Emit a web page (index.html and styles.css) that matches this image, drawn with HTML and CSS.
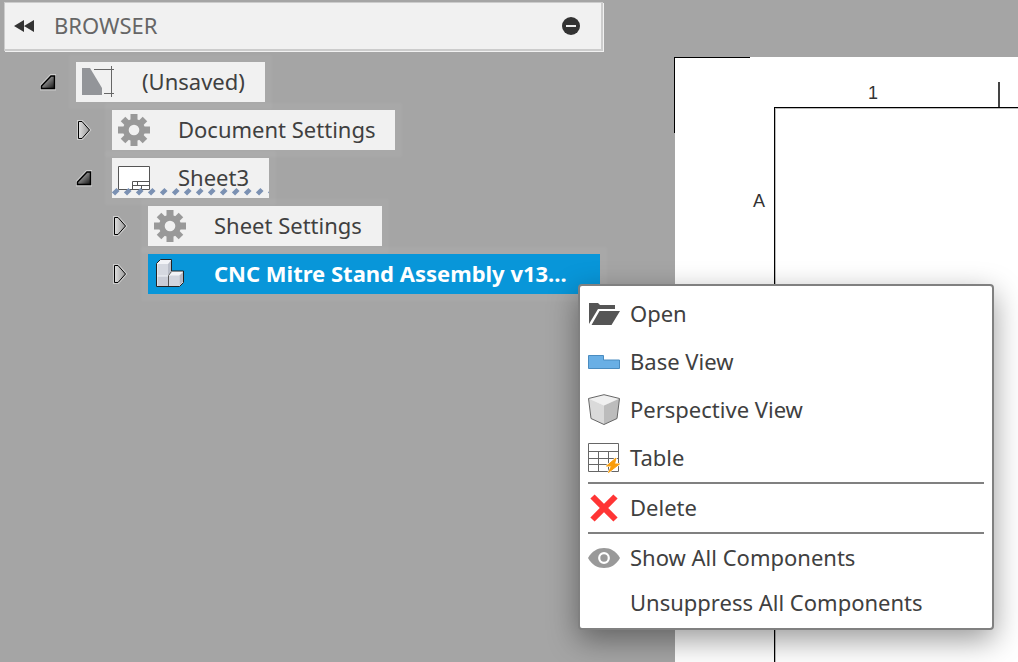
FILE: index.html
```html
<!DOCTYPE html>
<html lang="en">
<head>
  <meta charset="UTF-8">
  <meta name="viewport" content="width=device-width, initial-scale=1.0">
  <title>Browser</title>
  <link rel="stylesheet" href="styles.css">
</head>
<body>
  <!-- Shared icons -->
  <svg class="sprite" aria-hidden="true">
    <defs>
      <linearGradient id="open-fill" x1="0" y1="0" x2="1" y2="1">
        <stop offset="0.3" stop-color="#999"/>
        <stop offset="1" stop-color="#111"/>
      </linearGradient>
      <linearGradient id="closed-fill" x1="0" y1="0" x2="1" y2="0">
        <stop offset="0" stop-color="#e0e0e0"/>
        <stop offset="1" stop-color="#999"/>
      </linearGradient>
      <pattern id="hatch" width="12" height="9" patternUnits="userSpaceOnUse">
        <path d="M1.500 7L6 2.500" stroke="#7b91b3" stroke-width="4.500"/>
      </pattern>
    </defs>
    <symbol id="arrow-open" viewBox="0 0 16 20">
      <path d="M1 17v-3L11 3.500h3.500V17z" fill="none" stroke="#ccc" stroke-width="3"/>
      <path d="M1.500 16.500V14L11 4h3.500v12.500z" fill="url(#open-fill)" stroke="#000" stroke-width="1.500"/>
    </symbol>
    <symbol id="arrow-closed" viewBox="0 0 16 20">
      <path d="M2.500 1.500H6l7.500 8.500L6 18.500H2.500z" fill="none" stroke="#ccc" stroke-width="3"/>
      <path d="M2.500 1.500H6l7.500 8.500L6 18.500H2.500z" fill="url(#closed-fill)" stroke="#000"/>
    </symbol>
    <symbol id="gear" viewBox="0 0 32 32">
      <g fill="#999">
        <rect x="12.500" y="0" width="7" height="32"/>
        <rect x="0" y="12.500" width="32" height="7"/>
        <rect x="12.800" y="0.500" width="6.400" height="31" transform="rotate(45 16 16)"/>
        <rect x="12.800" y="0.500" width="6.400" height="31" transform="rotate(-45 16 16)"/>
        <circle cx="16" cy="16" r="11"/>
      </g>
      <circle cx="16" cy="16" r="5.300" fill="#f1f1f1"/>
    </symbol>
  </svg>

  <main class="canvas">
    <div class="sheet">
      <div class="corner"></div>
      <div class="frame"></div>
      <div class="tick"></div>
      <span class="zone zone-col">1</span>
      <span class="zone zone-row">A</span>
    </div>

    <section class="browser">
      <header class="browser-header">
        <button class="header-btn" aria-label="Collapse panel">
          <svg width="20" height="12" viewBox="0 0 20 12"><path d="M0 6L10 0v12zM10 6l10-6v12z" fill="#333"/></svg>
        </button>
        <h1 class="browser-title">BROWSER</h1>
        <button class="header-btn" aria-label="Minimize">
          <svg width="18" height="18" viewBox="0 0 18 18"><circle cx="9" cy="9" r="9" fill="#333"/><path d="M4 9h10" stroke="#eee" stroke-width="2"/></svg>
        </button>
      </header>

      <ul class="tree">
        <li>
          <div class="row">
            <button class="twisty" aria-label="Collapse document"><svg width="16" height="20"><use href="#arrow-open"/></svg></button>
            <button class="node">
              <svg width="32" height="32" viewBox="0 0 32 32">
                <path d="M0 2h8l12 20v7H0z" fill="#939599"/>
                <path d="M12 3.500h20M29.500 0v31M22 27.500h10" stroke="#666" fill="none"/>
              </svg>
              <span class="label">(Unsaved)</span>
            </button>
          </div>
          <ul>
            <li>
              <div class="row">
                <button class="twisty" aria-label="Expand document settings"><svg width="16" height="20"><use href="#arrow-closed"/></svg></button>
                <button class="node"><svg width="32" height="32"><use href="#gear"/></svg><span class="label">Document Settings</span></button>
              </div>
            </li>
            <li>
              <div class="row">
                <button class="twisty" aria-label="Collapse sheet"><svg width="16" height="20"><use href="#arrow-open"/></svg></button>
                <button class="node">
                  <svg width="32" height="32" viewBox="0 0 32 32">
                    <path d="M0.500 4.500h31v23H0.500z" fill="#fff" stroke="#555"/>
                    <path d="M14.500 27v-7.500h17M14.500 23.500h17M19.500 19.500v4M23.500 23.500v4" fill="none" stroke="#555"/>
                  </svg>
                  <span class="label">Sheet3</span>
                  <svg class="hatch" aria-hidden="true"><rect width="100%" height="9" fill="url(#hatch)"/></svg>
                </button>
              </div>
              <ul>
                <li>
                  <div class="row">
                    <button class="twisty" aria-label="Expand sheet settings"><svg width="16" height="20"><use href="#arrow-closed"/></svg></button>
                    <button class="node"><svg width="32" height="32"><use href="#gear"/></svg><span class="label">Sheet Settings</span></button>
                  </div>
                </li>
                <li>
                  <div class="row">
                    <button class="twisty" aria-label="Expand assembly"><svg width="16" height="20"><use href="#arrow-closed"/></svg></button>
                    <button class="node selected">
                      <svg width="32" height="32" viewBox="0 0 32 32">
                        <path d="M2.500 5.500l4-4h11V13h12v11.500l-4 4h-23z" fill="#f2f3f7" stroke="#222" stroke-linejoin="round"/>
                        <path d="M3.500 6h10.500v11.500H3.500z" fill="#d5d8e0"/>
                        <path d="M3.500 18.500H14V28H3.500z" fill="#c9ccd6"/>
                        <path d="M14 6l3-3.500V14l-3 3z" fill="#b9bdc8"/>
                        <path d="M15 17.500h10.500V28H15z" fill="#d2d5de"/>
                        <path d="M25.500 17.500l3.500-3.500v10l-3.500 3.500z" fill="#b3b7c3"/>
                        <path d="M14.500 28V17.500l3-4" fill="none" stroke="#555"/>
                      </svg>
                      <span class="label">CNC Mitre Stand Assembly v13...</span>
                    </button>
                  </div>
                </li>
              </ul>
            </li>
          </ul>
        </li>
      </ul>
    </section>

    <div class="menu" role="menu">
      <button class="menu-item" role="menuitem">
        <svg width="32" height="32" viewBox="0 0 32 32"><path d="M1 5h9l2 2h15v4H10L1 26zM11.500 13H32l-8.500 14h-20z" fill="#555"/></svg>
        <span class="label">Open</span>
      </button>
      <button class="menu-item" role="menuitem">
        <svg width="32" height="32" viewBox="0 0 32 32"><path d="M0.500 9.500h15v4.500h16v8.500h-31z" fill="#69afe5" stroke="#4a8cc0"/></svg>
        <span class="label">Base View</span>
      </button>
      <button class="menu-item" role="menuitem">
        <svg width="32" height="32" viewBox="0 0 32 32">
          <path d="M0.500 4.500L16 0.700l15.500 3.800L16 11.500z" fill="#f0f0f0"/>
          <path d="M0.500 4.500L16 11.500v19L3 24.500z" fill="#dadada"/>
          <path d="M31.500 4.500L16 11.500v19l13-6z" fill="#bcbcbc"/>
          <path d="M0.500 4.500L16 0.700l15.500 3.800L29 24.500l-13 6-13-6z" fill="none" stroke="#666" stroke-linejoin="round"/>
        </svg>
        <span class="label">Perspective View</span>
      </button>
      <button class="menu-item" role="menuitem">
        <svg width="32" height="32" viewBox="0 0 32 32">
          <path d="M0.500 1.500h30v28h-30zM0.500 9.500h30M0.500 16.500h30M0.500 22.500h30M10.500 9.500v20M20.500 9.500v20" fill="#fff" stroke="#666"/>
          <path d="M28 16l-9.500 8h5L20.500 30.500 31.500 22h-5z" fill="#fa9d0a" stroke="#fff" stroke-width="2" paint-order="stroke"/>
          <path d="M28 16l-9.500 8h5L20.500 30.500 31.500 22h-5z" fill="none" stroke="#fa9d0a"/>
        </svg>
        <span class="label">Table</span>
      </button>
      <hr>
      <button class="menu-item" role="menuitem">
        <svg width="32" height="32" viewBox="0 0 32 32"><path d="M4.500 4.500l23 23M27.500 4.500l-23 23" stroke="#ff3535" stroke-width="6"/></svg>
        <span class="label">Delete</span>
      </button>
      <hr>
      <button class="menu-item" role="menuitem">
        <svg width="32" height="32" viewBox="0 0 32 32">
          <path d="M0 16C4 9 9.500 6 16 6s12 3 16 10c-4 7-9.500 10-16 10S4 23 0 16z" fill="#999"/>
          <circle cx="16" cy="16" r="4.800" fill="none" stroke="#fff" stroke-width="2.200"/>
        </svg>
        <span class="label">Show All Components</span>
      </button>
      <button class="menu-item short" role="menuitem"><span class="label">Unsuppress All Components</span></button>
    </div>
  </main>
</body>
</html>
```
FILE: styles.css
```css
* {
  box-sizing: border-box;
  margin: 0;
  padding: 0;
}

body {
  background: #a5a5a5;
  color: #404040;
  font-family: 'Noto Sans', 'Open Sans', sans-serif;
  font-size: 22px;
  line-height: 32px;
}

button {
  font: inherit;
  color: inherit;
  background: none;
  border: none;
  cursor: pointer;
}

ul {
  list-style: none;
}

svg {
  display: block;
  flex: none;
}

.sprite {
  position: absolute;
  width: 0;
  height: 0;
}

.canvas {
  position: relative;
  min-height: 100vh;
  padding: 2px 4px;
  overflow: hidden;
}

/* Drawing sheet */
.sheet {
  position: absolute;
  top: 57px;
  left: 675px;
  right: 0;
  bottom: 0;
  background: #fff;
}

.corner {
  position: absolute;
  top: 0;
  left: -1px;
  width: 76px;
  height: 76px;
  border-top: 1px solid #000;
  border-left: 1px solid #000;
}

.frame {
  position: absolute;
  top: 50px;
  left: 99px;
  right: 0;
  bottom: 0;
  border-top: 1px solid #000;
  border-left: 1px solid #000;
  box-shadow: inset 1px 1px 0 #bbb;
}

.tick {
  position: absolute;
  top: 25px;
  left: 323px;
  width: 2px;
  height: 25px;
  background: #444;
}

.zone {
  position: absolute;
  font-family: 'Liberation Sans', Arial, sans-serif;
  font-size: 18px;
  line-height: 20px;
  color: #333;
}

.zone-col {
  top: 26px;
  left: 193px;
}

.zone-row {
  top: 134px;
  left: 78px;
}

/* Browser panel */
.browser {
  position: relative;
  width: 100%;
  max-width: 599px;
}

.browser-header {
  display: flex;
  align-items: center;
  height: 49px;
  padding: 0 21px 0 9px;
  background: #f1f1f1;
  border: 1px solid #ccc;
  border-right: 2px solid #ccc;
  border-bottom: 2px solid #ccc;
  box-shadow: 1px 1px 0 #f1f1f1;
}

.header-btn {
  display: flex;
}

.browser-title {
  flex: 1;
  margin-left: 20px;
  padding-bottom: 2px;
  font-size: 22px;
  font-weight: 400;
  color: #666;
}

.tree {
  padding: 11px 3px 0 36px;
}

.tree ul {
  padding-left: 36px;
}

.row {
  display: flex;
  height: 40px;
  margin-bottom: 8px;
}

.twisty {
  display: flex;
  align-items: center;
  width: 36px;
}

.node {
  position: relative;
  display: flex;
  align-items: center;
  gap: 28px;
  padding: 0 20px 0 6px;
  background: #f1f1f1;
  box-shadow: 0 0 2px 7px rgba(255, 255, 255, 0.04);
  white-space: nowrap;
}

.node.selected {
  flex: 1;
  background: #0896d9;
  color: #fff;
  font-weight: 700;
}

.label {
  padding-bottom: 2px;
}

.hatch {
  position: absolute;
  left: 0;
  bottom: 2px;
  width: 100%;
  height: 9px;
}

/* Context menu */
.menu {
  position: absolute;
  top: 284px;
  left: 578px;
  width: 416px;
  padding: 4px 8px;
  background: #fff;
  border: 2px solid #808080;
  border-radius: 4px;
  box-shadow: 0 10px 30px rgba(0, 0, 0, 0.4);
}

.menu-item {
  display: flex;
  align-items: center;
  gap: 10px;
  width: 100%;
  height: 48px;
  text-align: left;
}

.menu-item.short {
  height: 42px;
  padding-left: 42px;
}

.menu hr {
  height: 2px;
  border: none;
  background: #808080;
}
```
